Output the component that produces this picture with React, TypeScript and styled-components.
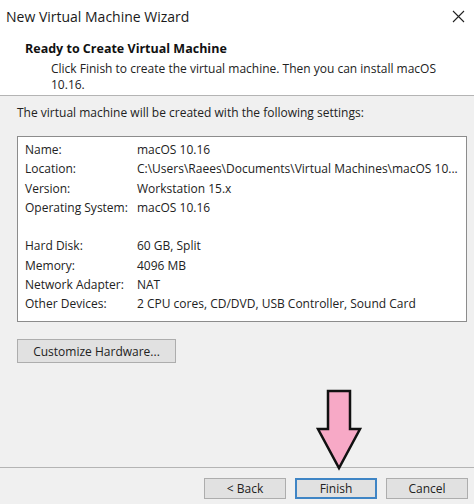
import React from "react";
import styled, { createGlobalStyle } from "styled-components";

const Global = createGlobalStyle`
  html, body { margin: 0; padding: 0; background: #f0f0f0; }
  body { font-family: "Open Sans", "Noto Sans", sans-serif; color: #222; }
`;

const Window = styled.div`
  position: relative;
  width: 474px;
  height: 504px;
  display: flex;
  flex-direction: column;
  background: #f0f0f0;
  overflow: hidden;
`;

const Top = styled.div`
  background: #fff;
  height: 96px;
  box-sizing: border-box;
  border-bottom: 1px solid #b4b4b4;
  display: flex;
  flex-direction: column;
`;

const TitleBar = styled.div`
  height: 32px;
  display: flex;
  align-items: center;
  justify-content: space-between;
  padding: 0 9px 0 6px;
  font-size: 14px;
  color: #1a1a1a;
`;

const Close = styled.svg`
  width: 13px;
  height: 13px;
`;

const Header = styled.div`
  padding: 8px 0 0 25px;
  display: flex;
  flex-direction: column;
`;

const HeaderTitle = styled.div`
  font-weight: 700;
  font-size: 12.5px;
  line-height: 18px;
  color: #111;
`;

const HeaderText = styled.div`
  padding-left: 26px;
  font-size: 12px;
  line-height: 16px;
  margin-top: 3px;
  width: 400px;
  color: #222;
`;

const Body = styled.div`
  flex: 1;
  display: flex;
  flex-direction: column;
  padding: 8px 7px 0 17px;
`;

const Intro = styled.div`
  font-size: 12px;
  line-height: 18px;
  color: #222;
`;

const ListBox = styled.div`
  margin-top: 14px;
  height: 186px;
  box-sizing: border-box;
  background: #fff;
  border: 1px solid #8c8c8c;
  padding: 3px 0 0 7px;
  display: grid;
  grid-template-columns: 112px 1fr;
  grid-auto-rows: 19.25px;
  font-size: 12px;
  align-items: center;
  color: #222;
`;

const Label = styled.div`
  white-space: nowrap;
`;

const Value = styled.div`
  white-space: nowrap;
`;

const Button = styled.button<{ $width: number; $height: number; $primary?: boolean }>`
  width: ${(p) => p.$width}px;
  height: ${(p) => p.$height}px;
  box-sizing: border-box;
  background: #e1e1e1;
  border: 1px solid ${(p) => (p.$primary ? "#3f85c5" : "#adadad")};
  box-shadow: ${(p) => (p.$primary ? "inset 0 0 0 1px #3f85c5" : "none")};
  font-family: "Open Sans", "Noto Sans", sans-serif;
  font-size: 12px;
  color: #222;
  padding: 0;
  display: flex;
  align-items: center;
  justify-content: center;
`;

const CustomizeRow = styled.div`
  margin-top: 17px;
`;

const Footer = styled.div`
  height: 37px;
  box-sizing: border-box;
  border-top: 1px solid #b4b4b4;
  display: flex;
  justify-content: flex-end;
  align-items: flex-start;
  gap: 9px;
  padding: 10px 6px 0 0;
`;

const Arrow = styled.svg`
  position: absolute;
  left: 315px;
  top: 388px;
  width: 48px;
  height: 84px;
`;

const rows: [string, string][] = [
  ["Name:", "macOS 10.16"],
  ["Location:", "C:\\Users\\Raees\\Documents\\Virtual Machines\\macOS 10..."],
  ["Version:", "Workstation 15.x"],
  ["Operating System:", "macOS 10.16"],
  ["", ""],
  ["Hard Disk:", "60 GB, Split"],
  ["Memory:", "4096 MB"],
  ["Network Adapter:", "NAT"],
  ["Other Devices:", "2 CPU cores, CD/DVD, USB Controller, Sound Card"],
];

export default function App() {
  return (
    <>
      <Global />
      <Window>
        <Top>
          <TitleBar>
            <span>New Virtual Machine Wizard</span>
            <Close viewBox="0 0 13 13">
              <path d="M1 1 L12 12 M12 1 L1 12" stroke="#222" strokeWidth="1.1" />
            </Close>
          </TitleBar>
          <Header>
            <HeaderTitle>Ready to Create Virtual Machine</HeaderTitle>
            <HeaderText>
              Click Finish to create the virtual machine. Then you can install macOS 10.16.
            </HeaderText>
          </Header>
        </Top>
        <Body>
          <Intro>The virtual machine will be created with the following settings:</Intro>
          <ListBox>
            {rows.map(([l, v], i) => (
              <React.Fragment key={i}>
                <Label>{l}</Label>
                <Value>{v}</Value>
              </React.Fragment>
            ))}
          </ListBox>
          <CustomizeRow>
            <Button $width={159} $height={24}>Customize Hardware...</Button>
          </CustomizeRow>
        </Body>
        <Footer>
          <Button $width={82} $height={21}>&lt; Back</Button>
          <Button $width={82} $height={21} $primary>Finish</Button>
          <Button $width={82} $height={21}>Cancel</Button>
        </Footer>
        <Arrow viewBox="0 0 48 84">
          <path
            d="M13 3 L35 3 L35 41 L45 41 L24 80 L3 41 L13 41 Z"
            fill="#f7a9c6"
            stroke="#111"
            strokeWidth="2.5"
            strokeLinejoin="miter"
          />
        </Arrow>
      </Window>
    </>
  );
}
